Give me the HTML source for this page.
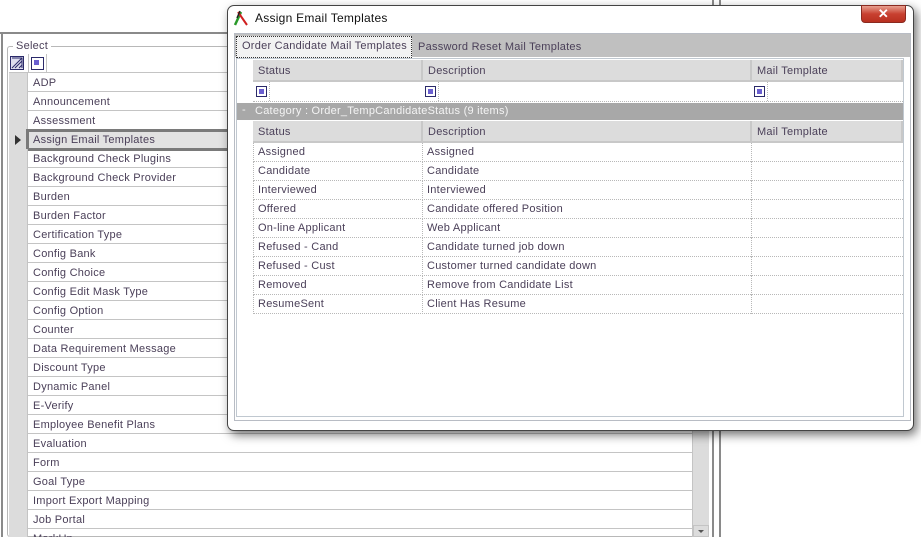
<!DOCTYPE html>
<html style="overflow:hidden"><head><meta charset="utf-8"><style>
*{margin:0;padding:0;box-sizing:border-box}
html,body{width:921px;height:537px;overflow:hidden}
body{background:#fff;position:relative;font-family:"Liberation Sans",Arial,sans-serif;font-size:11px;letter-spacing:0.25px;color:#4a3f58}
.a{position:absolute}
.lr{position:absolute;left:9px;width:683px;height:19px;border-bottom:1px solid #c4c4c4}
.lr .i{position:absolute;left:0;top:0;width:19px;height:19px;background:#dcdcdc;border-right:1px solid #c4c4c4}
.lr span{position:absolute;left:24px;top:4px}
.chk{position:absolute;width:11px;height:11px;border:1px solid #2b2a6a;background:#fff}
.chk:after{content:"";position:absolute;left:2px;top:2px;width:5px;height:5px;background:#6a5fd0}
.hd{position:absolute;height:22px;background:#dcdcdc;border-right:2px solid #c8c8c8;border-bottom:2px solid #c8c8c8}
.hd span{position:absolute;left:5px;top:5px}
.dr{position:absolute;left:253px;width:650px;height:19px;border-bottom:1px dotted #b8b8b8;border-left:1px dotted #b8b8b8}
.dr span{position:absolute;top:3px}
.dr .c1{left:4px}.dr .c2{left:173px}
.dr .s1,.dr .s2{position:absolute;top:0;height:19px;border-left:1px dotted #b8b8b8}
</style></head><body>
<div class="a" style="left:712px;top:0;width:2px;height:537px;background:#8a8a8a"></div>
<div class="a" style="left:719px;top:0;width:2px;height:537px;background:#8a8a8a"></div>
<div class="a" style="left:0;top:32px;width:713px;height:2px;background:#8a8a8a"></div>
<div class="a" style="left:1px;top:32px;width:2px;height:505px;background:#8a8a8a"></div>
<div class="a" style="left:7px;top:46px;width:702px;height:491px;border:1px solid #b8b8b8;border-radius:3px"></div>
<div class="a" style="left:13px;top:40px;background:#fff;padding:0 3px;font-size:11px">Select</div>
<div class="a" style="left:9px;top:54px;width:683px;height:19px;border-bottom:1px solid #c4c4c4"></div>
<div class="a" style="left:10px;top:56px;width:14px;height:14px;border:1px solid #2b2a6a;background:#dde"><svg width="12" height="12" style="position:absolute;left:0;top:0"><path d="M1 11L11 1M4 11L11 4M8 11L11 8M1 1H11V11" stroke="#2b2a6a" fill="none"/></svg></div>
<div class="a" style="left:28px;top:54px;width:1px;height:19px;background:#c4c4c4"></div>
<div class="chk" style="left:31px;top:57px;width:13px;height:13px"></div>
<div class="a" style="left:46px;top:54px;width:1px;height:19px;background:#c4c4c4"></div>
<div class="lr" style="top:73px"><div class="i"></div><span>ADP</span></div>
<div class="lr" style="top:92px"><div class="i"></div><span>Announcement</span></div>
<div class="lr" style="top:111px"><div class="i"></div><span>Assessment</span></div>
<div class="lr" style="top:130px;background:#e2e2e2"><div class="i"></div><span>Assign Email Templates</span></div>
<div class="a" style="left:26px;top:129px;width:210px;height:22px;border:3px solid #7a7a7a;border-right:none"></div>
<div class="a" style="left:15px;top:135px;width:0;height:0;border-left:6px solid #333;border-top:5px solid transparent;border-bottom:5px solid transparent"></div>
<div class="lr" style="top:149px"><div class="i"></div><span>Background Check Plugins</span></div>
<div class="lr" style="top:168px"><div class="i"></div><span>Background Check Provider</span></div>
<div class="lr" style="top:187px"><div class="i"></div><span>Burden</span></div>
<div class="lr" style="top:206px"><div class="i"></div><span>Burden Factor</span></div>
<div class="lr" style="top:225px"><div class="i"></div><span>Certification Type</span></div>
<div class="lr" style="top:244px"><div class="i"></div><span>Config Bank</span></div>
<div class="lr" style="top:263px"><div class="i"></div><span>Config Choice</span></div>
<div class="lr" style="top:282px"><div class="i"></div><span>Config Edit Mask Type</span></div>
<div class="lr" style="top:301px"><div class="i"></div><span>Config Option</span></div>
<div class="lr" style="top:320px"><div class="i"></div><span>Counter</span></div>
<div class="lr" style="top:339px"><div class="i"></div><span>Data Requirement Message</span></div>
<div class="lr" style="top:358px"><div class="i"></div><span>Discount Type</span></div>
<div class="lr" style="top:377px"><div class="i"></div><span>Dynamic Panel</span></div>
<div class="lr" style="top:396px"><div class="i"></div><span>E-Verify</span></div>
<div class="lr" style="top:415px"><div class="i"></div><span>Employee Benefit Plans</span></div>
<div class="lr" style="top:434px"><div class="i"></div><span>Evaluation</span></div>
<div class="lr" style="top:453px"><div class="i"></div><span>Form</span></div>
<div class="lr" style="top:472px"><div class="i"></div><span>Goal Type</span></div>
<div class="lr" style="top:491px"><div class="i"></div><span>Import Export Mapping</span></div>
<div class="lr" style="top:510px"><div class="i"></div><span>Job Portal</span></div>
<div class="lr" style="top:529px"><div class="i"></div><span>MarkUp</span></div>
<div class="a" style="left:692px;top:54px;width:17px;height:483px;background:#dcdcdc;border-left:1px solid #c4c4c4"></div>
<div class="a" style="left:693px;top:525px;width:16px;height:12px;border:1px solid #c4c4c4"><div style="position:absolute;left:4px;top:4px;border-top:3px solid #555;border-left:3px solid transparent;border-right:3px solid transparent"></div></div>

<div class="a" style="left:227px;top:5px;width:687px;height:426px;background:#fff;border:1px solid #444;border-radius:7px;box-shadow:3px 4px 10px rgba(0,0,0,.55)"></div>
<svg class="a" style="left:233px;top:9px" width="16" height="18"><path d="M2 16L8 3" stroke="#2a9a2a" stroke-width="2.5"/><path d="M5 3L14 16" stroke="#d02020" stroke-width="2"/><path d="M7 2L4 9" stroke="#222" stroke-width="1.5"/></svg>
<div class="a" style="left:255px;top:11px;font-size:12px;color:#111">Assign Email Templates</div>
<div class="a" style="left:861px;top:5px;width:45px;height:18px;border:1px solid #8a2a20;border-radius:0 0 4px 4px;background:linear-gradient(#e8a090,#c84030 50%,#b83020);color:#fff;text-align:center;font-weight:bold;font-size:13px;line-height:16px">✕</div>
<div class="a" style="left:234px;top:33px;width:677px;height:388px;border:1px solid #b8bcc4;background:#fff"></div>
<div class="a" style="left:235px;top:34px;width:675px;height:23px;background:#c0c0c0"></div>
<div class="a" style="left:236px;top:36px;width:176px;height:22px;background:#f2f2f2;border:1px dotted #333"></div>
<div class="a" style="left:242px;top:40px">Order Candidate Mail Templates</div>
<div class="a" style="left:418px;top:41px">Password Reset Mail Templates</div>
<div class="a" style="left:236px;top:58px;width:668px;height:359px;border:1px solid #c0c8d0"></div>
<div class="hd" style="left:253px;top:60px;width:170px"><span>Status</span></div>
<div class="hd" style="left:423px;top:60px;width:329px"><span>Description</span></div>
<div class="hd" style="left:752px;top:60px;width:151px"><span>Mail Template</span></div>
<div class="a" style="left:253px;top:82px;width:650px;height:20px;border-bottom:1px dotted #b8b8b8"></div>
<div class="chk" style="left:256px;top:86px"></div>
<div class="chk" style="left:425px;top:86px"></div>
<div class="chk" style="left:754px;top:86px"></div>
<div class="a" style="left:269px;top:82px;height:19px;border-left:1px dotted #b8b8b8"></div>
<div class="a" style="left:438px;top:82px;height:19px;border-left:1px dotted #b8b8b8"></div>
<div class="a" style="left:767px;top:82px;height:19px;border-left:1px dotted #b8b8b8"></div>
<div class="a" style="left:237px;top:103px;width:666px;height:17px;background:#a8a8a8;color:#f4f4f4"><span style="position:absolute;left:5px;top:1px">-</span><span style="position:absolute;left:18px;top:2px">Category : Order_TempCandidateStatus (9 items)</span></div>
<div class="hd" style="left:253px;top:121px;width:170px;height:22px"><span>Status</span></div>
<div class="hd" style="left:423px;top:121px;width:329px;height:22px"><span>Description</span></div>
<div class="hd" style="left:752px;top:121px;width:151px;height:22px"><span>Mail Template</span></div>
<div class="dr" style="top:143px"><span class="c1">Assigned</span><span class="c2">Assigned</span><i class="s1" style="left:168px"></i><i class="s2" style="left:497px"></i></div>
<div class="dr" style="top:162px"><span class="c1">Candidate</span><span class="c2">Candidate</span><i class="s1" style="left:168px"></i><i class="s2" style="left:497px"></i></div>
<div class="dr" style="top:181px"><span class="c1">Interviewed</span><span class="c2">Interviewed</span><i class="s1" style="left:168px"></i><i class="s2" style="left:497px"></i></div>
<div class="dr" style="top:200px"><span class="c1">Offered</span><span class="c2">Candidate offered Position</span><i class="s1" style="left:168px"></i><i class="s2" style="left:497px"></i></div>
<div class="dr" style="top:219px"><span class="c1">On-line Applicant</span><span class="c2">Web Applicant</span><i class="s1" style="left:168px"></i><i class="s2" style="left:497px"></i></div>
<div class="dr" style="top:238px"><span class="c1">Refused - Cand</span><span class="c2">Candidate turned job down</span><i class="s1" style="left:168px"></i><i class="s2" style="left:497px"></i></div>
<div class="dr" style="top:257px"><span class="c1">Refused - Cust</span><span class="c2">Customer turned candidate down</span><i class="s1" style="left:168px"></i><i class="s2" style="left:497px"></i></div>
<div class="dr" style="top:276px"><span class="c1">Removed</span><span class="c2">Remove from Candidate List</span><i class="s1" style="left:168px"></i><i class="s2" style="left:497px"></i></div>
<div class="dr" style="top:295px"><span class="c1">ResumeSent</span><span class="c2">Client Has Resume</span><i class="s1" style="left:168px"></i><i class="s2" style="left:497px"></i></div>
</body></html>
